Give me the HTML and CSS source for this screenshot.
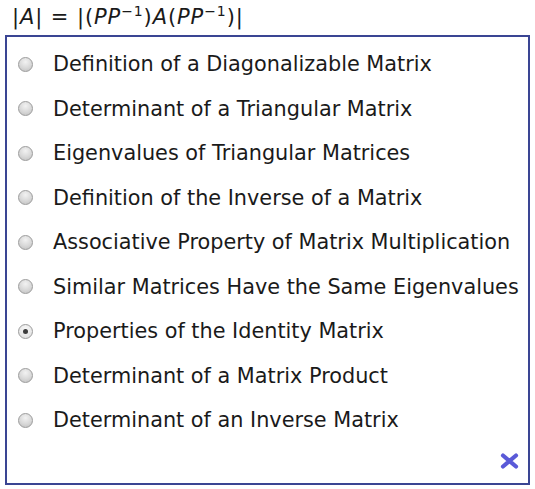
FILE: index.html
```html
<!DOCTYPE html>
<html>
<head>
<meta charset="utf-8">
<link rel="stylesheet" href="styles.css">
</head>
<body>
<div class="title"><span class="bar">|</span><i>A</i><span class="bar">|</span> = <span class="bar">|</span>(<i>PP</i><sup>−1</sup>)<i>A</i>(<i>PP</i><sup>−1</sup>)<span class="bar">|</span></div>
<div class="box">
  <ul class="options">
    <li class="opt"><span class="radio"></span><span class="label">Definition of a Diagonalizable Matrix</span></li>
    <li class="opt"><span class="radio"></span><span class="label">Determinant of a Triangular Matrix</span></li>
    <li class="opt"><span class="radio"></span><span class="label">Eigenvalues of Triangular Matrices</span></li>
    <li class="opt"><span class="radio"></span><span class="label">Definition of the Inverse of a Matrix</span></li>
    <li class="opt"><span class="radio"></span><span class="label">Associative Property of Matrix Multiplication</span></li>
    <li class="opt"><span class="radio"></span><span class="label">Similar Matrices Have the Same Eigenvalues</span></li>
    <li class="opt"><span class="radio checked"></span><span class="label">Properties of the Identity Matrix</span></li>
    <li class="opt"><span class="radio"></span><span class="label">Determinant of a Matrix Product</span></li>
    <li class="opt"><span class="radio"></span><span class="label">Determinant of an Inverse Matrix</span></li>
  </ul>
  <div class="footer">
    <svg class="xicon" width="19" height="16" viewBox="0 0 19 16">
      <path d="M3 2.5 L16 13.5 M16 2.5 L3 13.5" stroke="#5a5ad8" stroke-width="4.2" stroke-linecap="round"/>
    </svg>
  </div>
</div>
</body>
</html>
```
FILE: styles.css
```css
html, body {
  margin: 0;
  padding: 0;
  background: #fff;
}
body {
  font-family: "DejaVu Sans", Verdana, sans-serif;
  font-size: 20.8px;
  color: #1a1a1a;
  width: 535px;
  height: 489px;
  overflow: hidden;
}
.title {
  height: 35px;
  box-sizing: border-box;
  padding: 4px 0 0 12px;
  line-height: 26px;
  font-size: 21px;
  letter-spacing: 0.9px;
  white-space: nowrap;
}
.title sup {
  font-size: 14px;
  line-height: 0;
  vertical-align: 8px;
}
.box {
  margin-left: 5px;
  width: 525px;
  height: 450px;
  box-sizing: border-box;
  border: 2px solid #3a4593;
  display: flex;
  flex-direction: column;
}
.options {
  list-style: none;
  margin: 0;
  padding: 5px 0 0 0;
}
.opt {
  height: 44.5px;
  display: flex;
  align-items: center;
  white-space: nowrap;
}
.radio {
  width: 15px;
  height: 15px;
  box-sizing: border-box;
  border-radius: 50%;
  border: 1px solid #9c9c9c;
  background: radial-gradient(circle at 50% 30%, #f2f2f2 0%, #d8d8d8 55%, #bdbdbd 100%);
  margin-left: 11px;
  margin-right: 20px;
  flex: none;
  position: relative;
}
.radio.checked {
  background: radial-gradient(circle at 50% 30%, #f8f8f8 0%, #dcdcdc 100%);
}
.radio.checked::after {
  content: "";
  position: absolute;
  left: 4px;
  top: 4px;
  width: 5px;
  height: 5px;
  border-radius: 50%;
  background: #3c3c3c;
}
.label {
  line-height: 24px;
}
.footer {
  margin-top: auto;
  display: flex;
  justify-content: flex-end;
  padding: 0 9px 14px 0;
}
.xicon {
  display: block;
}
```
